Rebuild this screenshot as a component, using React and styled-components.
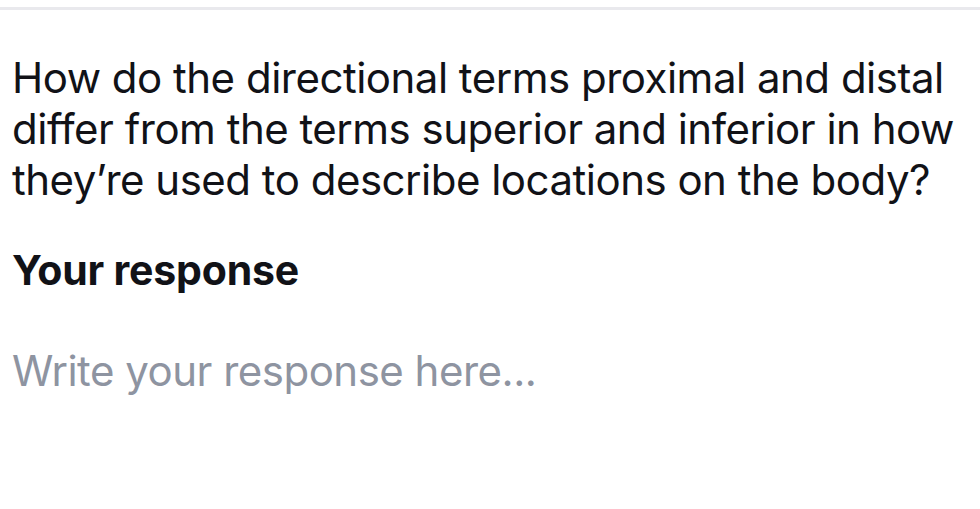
import React from 'react';
import styled, { createGlobalStyle } from 'styled-components';

const GlobalStyle = createGlobalStyle`
  html, body {
    margin: 0;
    padding: 0;
    background: #ffffff;
  }
  body {
    font-family: Inter, "Noto Sans", "Liberation Sans", sans-serif;
    -webkit-font-smoothing: antialiased;
  }
`;

const Page = styled.div`
  width: 980px;
  height: 509px;
  overflow: hidden;
  background: #ffffff;
  padding-top: 7px;
  box-sizing: border-box;
`;

const Divider = styled.div`
  height: 3px;
  background: #e9e9ed;
`;

const Content = styled.div`
  display: flex;
  flex-direction: column;
  padding: 42px 10px 0 12px;
`;

const Question = styled.p`
  margin: 0;
  font-size: 42px;
  line-height: 51px;
  font-weight: 400;
  color: #111217;
  letter-spacing: -0.5px;
`;

const Label = styled.h2`
  margin: 41px 0 0 0;
  font-size: 41px;
  line-height: 48px;
  font-weight: 700;
  color: #111217;
  letter-spacing: -0.2px;
`;

const ResponseInput = styled.textarea`
  margin: 51px 0 0 0;
  padding: 0;
  border: none;
  outline: none;
  resize: none;
  height: 120px;
  font-family: inherit;
  font-size: 42px;
  line-height: 51px;
  letter-spacing: -0.5px;
  color: #111217;
  background: transparent;

  &::placeholder {
    color: #8e94a1;
  }
`;

export default function App() {
  return (
    <>
      <GlobalStyle />
      <Page>
        <Divider />
        <Content>
          <Question>
            How do the directional terms proximal and distal differ from the terms superior and inferior in how they’re used to describe locations on the body?
          </Question>
          <Label>Your response</Label>
          <ResponseInput placeholder="Write your response here..." />
        </Content>
      </Page>
    </>
  );
}
